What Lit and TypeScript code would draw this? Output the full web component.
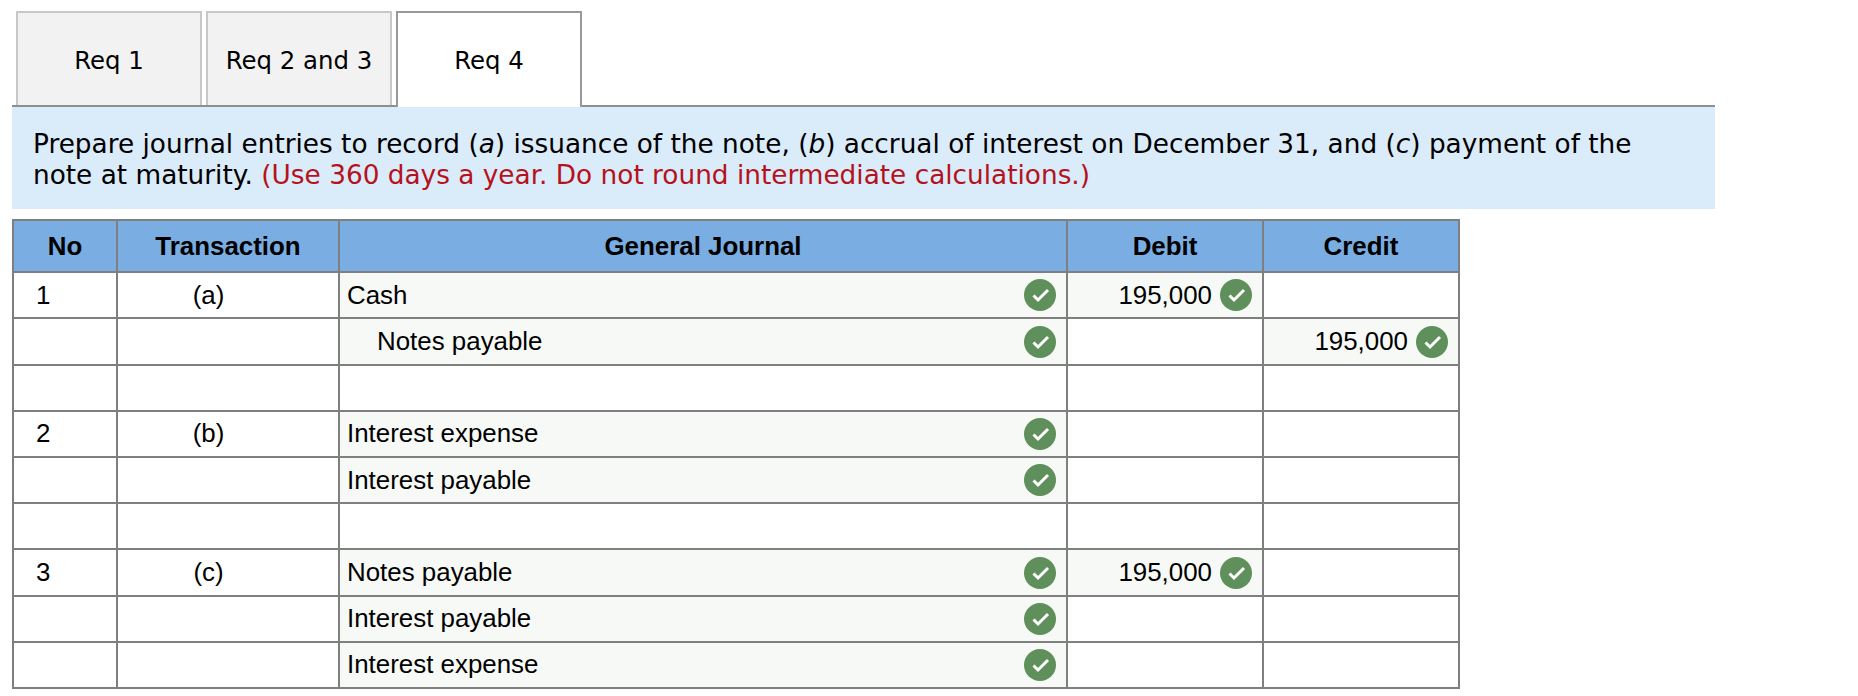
import { LitElement, html, css, nothing } from 'lit';
import { customElement } from 'lit/decorators.js';

type Row = {
  no?: string;
  tx?: string;
  account?: string;
  indent?: boolean;
  debit?: string;
  credit?: string;
  h: number;
  up?: boolean;
};

const rows: Row[] = [
  { no: '1', tx: '(a)', account: 'Cash', debit: '195,000', h: 46 },
  { account: 'Notes payable', indent: true, credit: '195,000', h: 47 },
  { h: 46 },
  { no: '2', tx: '(b)', account: 'Interest expense', h: 46, up: true },
  { account: 'Interest payable', h: 46 },
  { h: 46 },
  { no: '3', tx: '(c)', account: 'Notes payable', debit: '195,000', h: 47 },
  { account: 'Interest payable', h: 46, up: true },
  { account: 'Interest expense', h: 46, up: true },
];

const check = html`<svg class="check" viewBox="0 0 32 32">
  <circle cx="16" cy="16" r="16" fill="#5f8f5a"></circle>
  <path d="M9.5 16.5L14 21L24 11" fill="none" stroke="#fff" stroke-width="3"></path>
</svg>`;

@customElement('app-root')
export class AppRoot extends LitElement {
  static styles = css`
    :host {
      display: block;
      width: 1858px;
      height: 696px;
      background: #fff;
      overflow: hidden;
      color: #000;
    }

    .page {
      padding: 11px 0 0 12px;
    }

    .tabs {
      display: flex;
      gap: 4px;
      width: 1703px;
      padding-left: 4px;
      box-sizing: border-box;
      border-bottom: 2px solid #8f8f8f;
      font: 24.4px 'DejaVu Sans', sans-serif;
    }

    .tab {
      width: 186px;
      height: 94px;
      box-sizing: border-box;
      border: 2px solid #c8c8c8;
      border-bottom: none;
      background: #f2f2f2;
      display: flex;
      align-items: center;
      justify-content: center;
      padding-top: 2px;
    }

    .tab.active {
      height: 96px;
      margin-bottom: -2px;
      padding-top: 0;
      border-color: #999;
      background: #fff;
    }

    .prompt {
      width: 1703px;
      height: 102px;
      box-sizing: border-box;
      padding: 22px 0 0 21px;
      background: #daebfa;
      font: 26.33px/31px 'DejaVu Sans', sans-serif;
    }

    .prompt .note {
      color: #b5121b;
    }

    table {
      margin: 10px 0 0;
      width: 1448px;
      table-layout: fixed;
      border-collapse: collapse;
      font: 25.9px 'Liberation Sans', Arial, sans-serif;
    }

    th,
    td {
      border: 2px solid #7f7f7f;
      padding: 0;
      overflow: hidden;
    }

    th {
      height: 50px;
      background: #7aade2;
      font-weight: 700;
      text-align: center;
    }

    td.no {
      text-align: left;
      padding-left: 22px;
    }

    td.tx {
      text-align: center;
      padding-right: 39px;
    }

    tr.up td.no,
    tr.up td.tx,
    tr.up .cell span {
      padding-bottom: 2px;
    }

    .filled {
      background: #f7f9f6;
    }

    .cell {
      display: flex;
      align-items: center;
      justify-content: space-between;
      padding: 0 10px 0 7px;
    }

    .cell.indent {
      padding-left: 37px;
    }

    .cell.amount {
      justify-content: flex-end;
      gap: 8px;
    }

    .check {
      width: 32px;
      height: 32px;
      flex: none;
      display: block;
    }
  `;

  private renderAmount(value?: string) {
    if (!value) return html`<td></td>`;
    return html`<td class="filled">
      <div class="cell amount"><span>${value}</span>${check}</div>
    </td>`;
  }

  private renderRow(row: Row) {
    return html`<tr class="${row.up ? 'up' : ''}" style="height:${row.h}px">
      <td class="no">${row.no ?? nothing}</td>
      <td class="tx">${row.tx ?? nothing}</td>
      ${row.account
        ? html`<td class="filled">
            <div class="cell ${row.indent ? 'indent' : ''}">
              <span>${row.account}</span>${check}
            </div>
          </td>`
        : html`<td></td>`}
      ${this.renderAmount(row.debit)} ${this.renderAmount(row.credit)}
    </tr>`;
  }

  render() {
    return html`
      <div class="page">
        <div class="tabs">
          <div class="tab">Req 1</div>
          <div class="tab">Req 2 and 3</div>
          <div class="tab active">Req 4</div>
        </div>
        <div class="prompt">
          Prepare journal entries to record (<i>a</i>) issuance of the note, (<i>b</i>) accrual of
          interest on December 31, and (<i>c</i>) payment of the<br />
          note at maturity.
          <span class="note">(Use 360 days a year. Do not round intermediate calculations.)</span>
        </div>
        <table>
          <colgroup>
            <col style="width:104px" />
            <col style="width:222px" />
            <col style="width:728px" />
            <col style="width:196px" />
            <col style="width:196px" />
          </colgroup>
          <thead>
            <tr>
              <th>No</th>
              <th>Transaction</th>
              <th>General Journal</th>
              <th>Debit</th>
              <th>Credit</th>
            </tr>
          </thead>
          <tbody>
            ${rows.map((r) => this.renderRow(r))}
          </tbody>
        </table>
      </div>
    `;
  }
}

declare global {
  interface HTMLElementTagNameMap {
    'app-root': AppRoot;
  }
}
